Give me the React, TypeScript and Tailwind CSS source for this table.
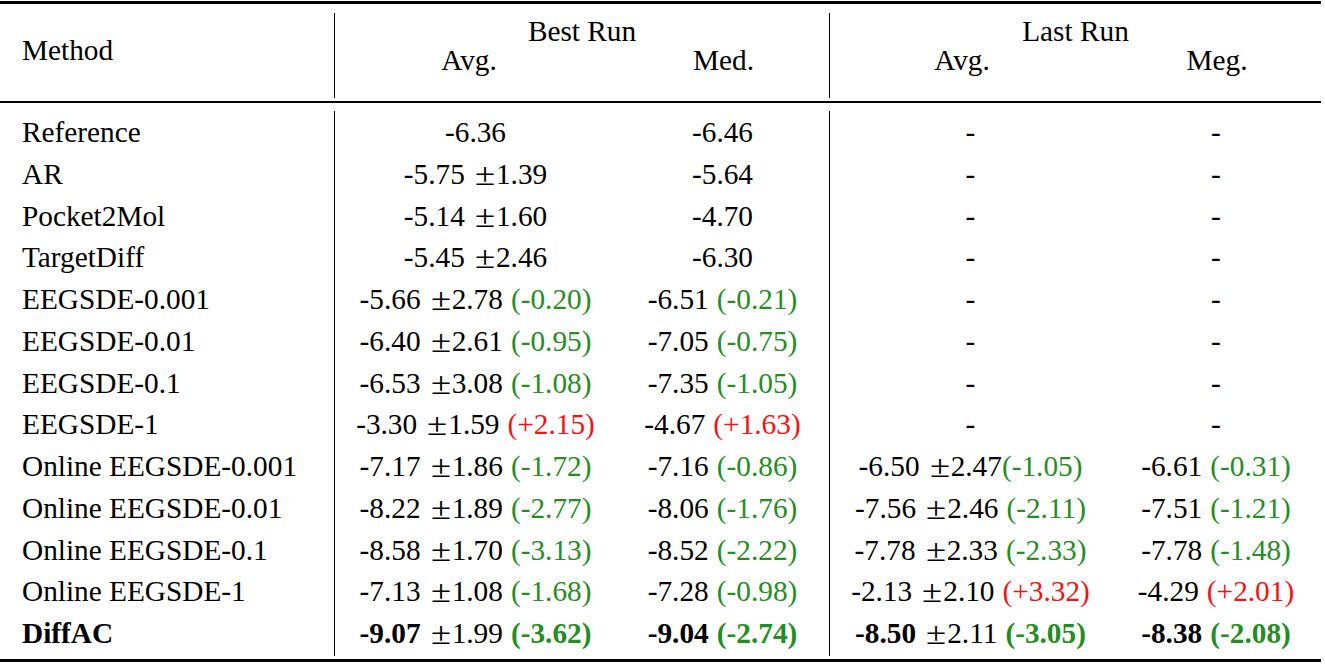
type Cell = {
  v: string;
  sd?: string;
  d?: string;
  up?: boolean;
  bold?: boolean;
  tight?: boolean;
};

type Row = { name: string; bold?: boolean; cells: Cell[] };

const dash: Cell = { v: "-" };

const ROWS: Row[] = [
  { name: "Reference", cells: [{ v: "-6.36" }, { v: "-6.46" }, dash, dash] },
  { name: "AR", cells: [{ v: "-5.75", sd: "1.39" }, { v: "-5.64" }, dash, dash] },
  { name: "Pocket2Mol", cells: [{ v: "-5.14", sd: "1.60" }, { v: "-4.70" }, dash, dash] },
  { name: "TargetDiff", cells: [{ v: "-5.45", sd: "2.46" }, { v: "-6.30" }, dash, dash] },
  {
    name: "EEGSDE-0.001",
    cells: [{ v: "-5.66", sd: "2.78", d: "-0.20" }, { v: "-6.51", d: "-0.21" }, dash, dash],
  },
  {
    name: "EEGSDE-0.01",
    cells: [{ v: "-6.40", sd: "2.61", d: "-0.95" }, { v: "-7.05", d: "-0.75" }, dash, dash],
  },
  {
    name: "EEGSDE-0.1",
    cells: [{ v: "-6.53", sd: "3.08", d: "-1.08" }, { v: "-7.35", d: "-1.05" }, dash, dash],
  },
  {
    name: "EEGSDE-1",
    cells: [{ v: "-3.30", sd: "1.59", d: "+2.15", up: true }, { v: "-4.67", d: "+1.63", up: true }, dash, dash],
  },
  {
    name: "Online EEGSDE-0.001",
    cells: [
      { v: "-7.17", sd: "1.86", d: "-1.72" },
      { v: "-7.16", d: "-0.86" },
      { v: "-6.50", sd: "2.47", d: "-1.05", tight: true },
      { v: "-6.61", d: "-0.31" },
    ],
  },
  {
    name: "Online EEGSDE-0.01",
    cells: [
      { v: "-8.22", sd: "1.89", d: "-2.77" },
      { v: "-8.06", d: "-1.76" },
      { v: "-7.56", sd: "2.46", d: "-2.11" },
      { v: "-7.51", d: "-1.21" },
    ],
  },
  {
    name: "Online EEGSDE-0.1",
    cells: [
      { v: "-8.58", sd: "1.70", d: "-3.13" },
      { v: "-8.52", d: "-2.22" },
      { v: "-7.78", sd: "2.33", d: "-2.33" },
      { v: "-7.78", d: "-1.48" },
    ],
  },
  {
    name: "Online EEGSDE-1",
    cells: [
      { v: "-7.13", sd: "1.08", d: "-1.68" },
      { v: "-7.28", d: "-0.98" },
      { v: "-2.13", sd: "2.10", d: "+3.32", up: true },
      { v: "-4.29", d: "+2.01", up: true },
    ],
  },
  {
    name: "DiffAC",
    bold: true,
    cells: [
      { v: "-9.07", sd: "1.99", d: "-3.62", bold: true },
      { v: "-9.04", d: "-2.74", bold: true },
      { v: "-8.50", sd: "2.11", d: "-3.05", bold: true },
      { v: "-8.38", d: "-2.08", bold: true },
    ],
  },
];

function Value({ c }: { c: Cell }) {
  return (
    <span className="flex whitespace-pre">
      <span className={c.bold ? "font-bold" : ""}>{c.v}</span>
      {c.sd && (
        <>
          <span className="inline-block ml-[12px] mr-[3px] scale-x-[1.25] scale-y-[1.08]">±</span>
          <span>{c.sd}</span>
        </>
      )}
      {c.d && (
        <span
          className={`${c.tight ? "" : "ml-[8px]"} ${c.up ? "text-[#f01414]" : "text-[#268c26]"} ${
            c.bold ? "font-bold" : ""
          }`}
        >
          ({c.d})
        </span>
      )}
    </span>
  );
}

export default function App() {
  return (
    <div className="w-[1325px] h-[665px] bg-white text-black font-[family-name:'Liberation_Serif','Times_New_Roman',serif] text-[29.3px]">
      <div className="w-[1321px] pt-[1px]">
        {/* Header */}
        <div className="border-t-[3px] border-black">
          <div className="grid grid-cols-[334px_495px_492px] pb-[3px]">
            <div className="pt-[31px] pl-[22px] leading-[30px]">Method</div>
            <div className="mt-[9px] h-[85px] border-l border-black pt-[4px]">
              <div className="text-center leading-[28px]">Best Run</div>
              <div className="grid grid-cols-[282px_213px] leading-[30px]">
                <div className="text-center pr-[14px]">Avg.</div>
                <div className="text-center">Med.</div>
              </div>
            </div>
            <div className="mt-[9px] h-[85px] border-l border-black pt-[4px]">
              <div className="text-center leading-[28px]">Last Run</div>
              <div className="grid grid-cols-[282px_210px] leading-[30px]">
                <div className="text-center pr-[18px]">Avg.</div>
                <div className="text-center">Meg.</div>
              </div>
            </div>
          </div>
        </div>

        {/* Body */}
        <div className="border-t-2 border-black pt-[8px] pb-[5px]">
          {ROWS.map((r) => (
            <div key={r.name} className="grid grid-cols-[334px_282px_213px_282px_210px] h-[41.75px] items-center">
              <div className={`pl-[22px] ${r.bold ? "font-bold" : ""}`}>{r.name}</div>
              <div className="h-full flex items-center justify-center border-l border-black">
                <Value c={r.cells[0]} />
              </div>
              <div className="h-full flex items-center justify-center">
                <Value c={r.cells[1]} />
              </div>
              <div className="h-full flex items-center justify-center border-l border-black">
                <Value c={r.cells[2]} />
              </div>
              <div className="h-full flex items-center justify-center">
                <Value c={r.cells[3]} />
              </div>
            </div>
          ))}
        </div>
        <div className="border-t-[3px] border-black" />
      </div>
    </div>
  );
}
